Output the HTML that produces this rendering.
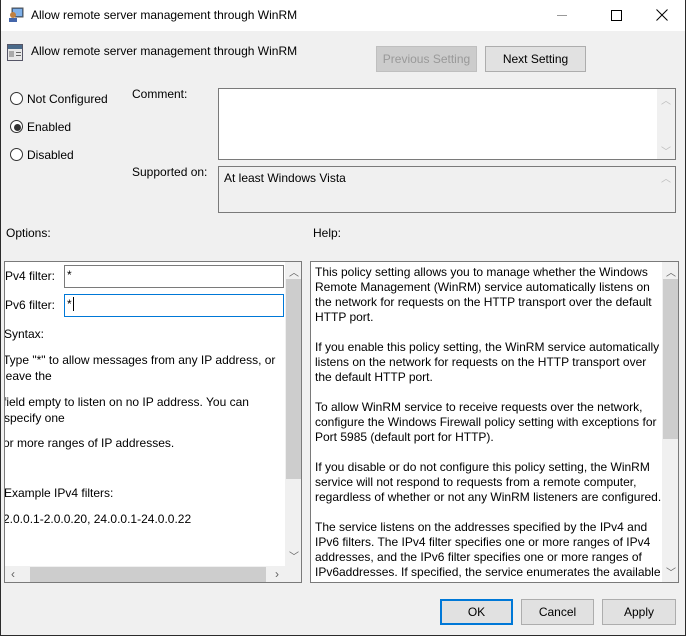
<!DOCTYPE html>
<html><head><style>
*{box-sizing:border-box;margin:0;padding:0}
body{width:686px;height:636px;overflow:hidden;background:#f0f0f0;font-family:"Liberation Sans",sans-serif;font-size:12px;color:#000;position:relative}
.a{position:absolute;white-space:nowrap}
.frame{position:absolute;left:0;top:0;width:686px;height:636px;border:1px solid #2b2b2b;border-top:none}
.btn{position:absolute;background:#e1e1e1;border:1px solid #adadad;text-align:center;line-height:24px}
.radio{position:absolute;width:13px;height:13px;border:1px solid #333;border-radius:50%;background:#fff}
.sb{position:absolute;background:#f0f0f0}
.th{position:absolute;background:#cdcdcd}
.ar{position:absolute;color:#606060;font-size:10px}
</style></head><body>
<div class="a" style="left:0;top:0;width:686px;height:31px;background:#fff"></div>
<svg class="a" style="left:8px;top:7px" width="16" height="16"><rect x="4" y="1" width="11" height="9" fill="#3a6fb0" stroke="#555"/><rect x="5" y="2" width="9" height="7" fill="#7fb0e8"/><circle cx="5" cy="8" r="3" fill="#c08040"/><rect x="1" y="11" width="8" height="4" fill="#4466aa"/></svg>
<div class="a" style="left:31px;top:8px">Allow remote server management through WinRM</div>
<div class="a" style="left:557px;top:15px;width:10px;height:1px;background:#999"></div>
<div class="a" style="left:611px;top:10px;width:11px;height:11px;border:1px solid #000"></div>
<svg class="a" style="left:656px;top:9px" width="12" height="12"><path d="M0.5 0.5L11.5 11.5M11.5 0.5L0.5 11.5" stroke="#000" stroke-width="1"/></svg>

<svg class="a" style="left:7px;top:44px" width="16" height="17"><rect x="0.5" y="0.5" width="15" height="16" fill="#e8e8e8" stroke="#556"/><rect x="1" y="1" width="14" height="4" fill="#4a6a8a"/><rect x="2" y="7" width="5" height="6" fill="#aaa"/><rect x="9" y="8" width="5" height="1" fill="#666"/><rect x="9" y="11" width="5" height="1" fill="#666"/></svg>
<div class="a" style="left:31px;top:44px">Allow remote server management through WinRM</div>
<div class="btn" style="left:376px;top:46px;width:101px;height:26px;background:#cccccc;border-color:#bfbfbf;color:#999">Previous Setting</div>
<div class="btn" style="left:485px;top:46px;width:101px;height:26px">Next Setting</div>

<div class="radio" style="left:10px;top:92px"></div><div class="a" style="left:27px;top:92px">Not Configured</div>
<div class="radio" style="left:10px;top:120px"></div><div class="a" style="left:14px;top:124px;width:7px;height:7px;border-radius:50%;background:#333"></div><div class="a" style="left:27px;top:120px">Enabled</div>
<div class="radio" style="left:10px;top:148px"></div><div class="a" style="left:27px;top:148px">Disabled</div>

<div class="a" style="left:132px;top:87px">Comment:</div>
<div class="a" style="left:218px;top:88px;width:458px;height:72px;border:1px solid #7a7a7a;background:#fff"></div>
<div class="sb" style="left:657px;top:89px;width:18px;height:70px"></div>
<div class="ar" style="left:661px;top:92px;color:#bbb">︿</div><div class="ar" style="left:661px;top:143px;color:#bbb">﹀</div>
<div class="a" style="left:132px;top:165px">Supported on:</div>
<div class="a" style="left:218px;top:166px;width:458px;height:47px;border:1px solid #7a7a7a;background:#f0f0f0"></div>
<div class="a" style="left:224px;top:171px">At least Windows Vista</div>
<div class="ar" style="left:661px;top:170px;color:#bbb">︿</div>

<div class="a" style="left:6px;top:226px">Options:</div>
<div class="a" style="left:313px;top:226px">Help:</div>

<div class="a" style="left:4px;top:261px;width:298px;height:322px;border:1px solid #7a7a7a;background:#fff;overflow:hidden">
 <div class="a" style="left:0;top:7px">Pv4 filter:</div>
 <div class="a" style="left:59px;top:3px;width:220px;height:23px;border:1px solid #7a7a7a;padding:2px 2px">*</div>
 <div class="a" style="left:0;top:36px">Pv6 filter:</div>
 <div class="a" style="left:59px;top:32px;width:220px;height:23px;border:1px solid #0078d7;padding:2px 2px">*<span style="border-left:1px solid #000;margin-left:1px"></span></div>
 <div class="a" style="left:-1px;top:65px">Syntax:</div>
 <div class="a" style="left:-2px;top:91px">Type "*" to allow messages from any IP address, or</div>
 <div class="a" style="left:-2px;top:107px">leave the</div>
 <div class="a" style="left:-2px;top:133px">field empty to listen on no IP address. You can</div>
 <div class="a" style="left:-1px;top:149px">specify one</div>
 <div class="a" style="left:-2px;top:174px">or more ranges of IP addresses.</div>
 <div class="a" style="left:-1px;top:224px">Example IPv4 filters:</div>
 <div class="a" style="left:-2px;top:250px">2.0.0.1-2.0.0.20, 24.0.0.1-24.0.0.22</div>
 <div class="sb" style="left:280px;top:0;width:17px;height:304px"></div>
 <div class="th" style="left:281px;top:17px;width:15px;height:200px"></div>
 <div class="ar" style="left:284px;top:2px">︿</div><div class="ar" style="left:284px;top:286px">﹀</div>
 <div class="sb" style="left:0;top:304px;width:297px;height:17px"></div>
 <div class="th" style="left:25px;top:305px;width:236px;height:15px"></div>
 <div class="ar" style="left:6px;top:305px;font-size:12px">‹</div><div class="ar" style="left:270px;top:305px;font-size:12px">›</div>
</div>

<div class="a" style="left:310px;top:261px;width:369px;height:322px;border:1px solid #7a7a7a;background:#fff;overflow:hidden">
 <div class="a" style="left:4px;top:3px;line-height:15px">This policy setting allows you to manage whether the Windows<br>Remote Management (WinRM) service automatically listens on<br>the network for requests on the HTTP transport over the default<br>HTTP port.<br><br>If you enable this policy setting, the WinRM service automatically<br>listens on the network for requests on the HTTP transport over<br>the default HTTP port.<br><br>To allow WinRM service to receive requests over the network,<br>configure the Windows Firewall policy setting with exceptions for<br>Port 5985 (default port for HTTP).<br><br>If you disable or do not configure this policy setting, the WinRM<br>service will not respond to requests from a remote computer,<br>regardless of whether or not any WinRM listeners are configured.<br><br>The service listens on the addresses specified by the IPv4 and<br>IPv6 filters. The IPv4 filter specifies one or more ranges of IPv4<br>addresses, and the IPv6 filter specifies one or more ranges of<br>IPv6addresses. If specified, the service enumerates the available<br>IP addresses on the computer and uses only addresses that fall</div>
 <div class="sb" style="left:351px;top:0;width:17px;height:320px"></div>
 <div class="th" style="left:352px;top:17px;width:15px;height:160px"></div>
 <div class="ar" style="left:355px;top:2px">︿</div><div class="ar" style="left:355px;top:302px">﹀</div>
</div>

<div class="btn" style="left:440px;top:599px;width:73px;height:26px;border:2px solid #0078d7;line-height:22px">OK</div>
<div class="btn" style="left:521px;top:599px;width:73px;height:26px">Cancel</div>
<div class="btn" style="left:602px;top:599px;width:74px;height:26px">Apply</div>
<div class="frame"></div>
</body></html>
